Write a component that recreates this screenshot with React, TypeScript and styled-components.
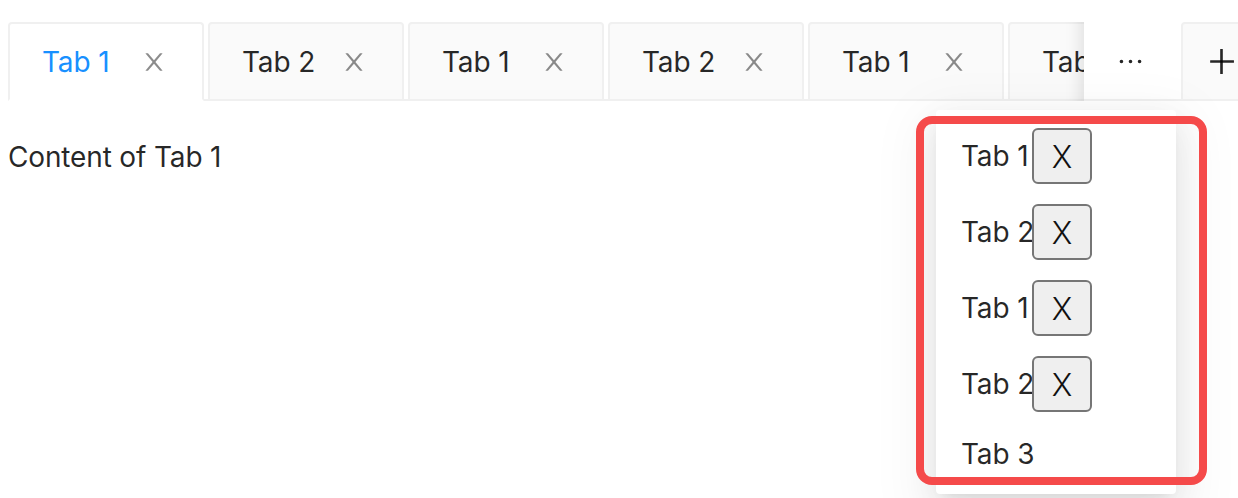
import styled, { createGlobalStyle } from "styled-components"

const GlobalStyle = createGlobalStyle`
    body {
        margin: 0;
        font-family: Inter, "Liberation Sans", sans-serif;
        color: rgba(0, 0, 0, 0.85);
        background: #fff;
    }
`
const Page = styled.div`
    position: relative;
    width: 1238px;
    height: 498px;
    overflow: hidden;
    padding: 22px 0 0 8px;
    box-sizing: border-box;
`
const Nav = styled.div`
    position: relative;
    display: flex;
    height: 79px;
    &::before {
        content: "";
        position: absolute;
        left: 0;
        right: -8px;
        bottom: 0;
        height: 2px;
        background: #f0f0f0;
    }
`
const NavWrap = styled.div`
    position: relative;
    width: 1076px;
    flex: none;
    overflow: hidden;
    &::after {
        content: "";
        position: absolute;
        top: 0;
        right: 0;
        bottom: 0;
        width: 32px;
        box-shadow: inset -20px 0 16px -16px rgba(0, 0, 0, 0.1);
        z-index: 2;
    }
`
const NavList = styled.div`
    display: flex;
    gap: 4px;
    height: 100%;
`
const Tab = styled.div<{ $active?: boolean }>`
    position: relative;
    z-index: 1;
    flex: none;
    box-sizing: border-box;
    width: 196px;
    height: 79px;
    padding: 0 36px 0 32px;
    display: flex;
    align-items: center;
    justify-content: space-between;
    font-size: 28px;
    letter-spacing: -0.15px;
    border: 2px solid #f0f0f0;
    border-bottom-color: ${(p) => (p.$active ? "#fff" : "#f0f0f0")};
    border-radius: 4px 4px 0 0;
    background: ${(p) => (p.$active ? "#fff" : "#fafafa")};
    color: ${(p) => (p.$active ? "#1890ff" : "rgba(0, 0, 0, 0.85)")};
`
const CloseIcon = styled.svg`
    width: 24px;
    height: 24px;
    fill: rgba(0, 0, 0, 0.45);
    flex: none;
`
const MoreButton = styled.div`
    flex: none;
    width: 93px;
    display: flex;
    align-items: center;
    justify-content: center;
`
const AddButton = styled.div`
    position: relative;
    z-index: 1;
    flex: none;
    box-sizing: border-box;
    width: 80px;
    height: 79px;
    margin-left: 4px;
    display: flex;
    align-items: center;
    justify-content: center;
    border: 2px solid #f0f0f0;
    border-radius: 4px 4px 0 0;
    background: #fafafa;
`
const OpIcon = styled.svg<{ $size: number }>`
    width: ${(p) => p.$size}px;
    height: ${(p) => p.$size}px;
    fill: rgba(0, 0, 0, 0.85);
`
const Content = styled.div`
    margin-top: 34px;
    font-size: 28px;
    line-height: 44px;
    letter-spacing: -0.15px;
`
const Dropdown = styled.ul`
    position: absolute;
    left: 936px;
    top: 110px;
    width: 240px;
    margin: 0;
    padding: 8px 0;
    list-style: none;
    background: #fff;
    border-radius: 4px;
    box-shadow: 0 6px 12px -8px rgba(0, 0, 0, 0.12), 0 12px 32px 0 rgba(0, 0, 0, 0.08),
        0 18px 56px 16px rgba(0, 0, 0, 0.05);
    z-index: 5;
`
const MenuItem = styled.li`
    display: flex;
    align-items: center;
    padding: 10px 24px 10px 25px;
    min-height: 44px;
    font-size: 28px;
    line-height: 44px;
    letter-spacing: -0.15px;
`
const MenuLabel = styled.span`
    width: 71px;
    flex: none;
    white-space: nowrap;
`
const RemoveButton = styled.button`
    box-sizing: border-box;
    width: 60px;
    height: 56px;
    padding: 0;
    border: 2px solid #767676;
    border-radius: 6px;
    background: #efefef;
    color: #111;
    font-family: Inter, "Liberation Sans", sans-serif;
    font-size: 31px;
    font-weight: 300;
    line-height: 1;
`
const Highlight = styled.div`
    position: absolute;
    left: 916px;
    top: 116px;
    width: 291px;
    height: 369px;
    box-sizing: border-box;
    border: 8px solid #f54a4a;
    border-radius: 16px;
    z-index: 6;
    pointer-events: none;
`

const closePath =
    "M563.8 512l262.5-312.9c4.4-5.2.7-13.1-6.1-13.1h-79.8c-4.7 0-9.2 2.1-12.3 5.7L511.6 449.8 295.1 191.7c-3-3.6-7.5-5.7-12.3-5.7H203c-6.8 0-10.5 7.9-6.1 13.1L459.4 512 196.9 824.9A7.95 7.95 0 00203 838h79.8c4.7 0 9.2-2.1 12.3-5.7l216.5-258.1 216.5 258.1c3 3.6 7.5 5.7 12.3 5.7h79.8c6.8 0 10.5-7.9 6.1-13.1L563.8 512z"

const tabs = ["Tab 1", "Tab 2", "Tab 1", "Tab 2", "Tab 1", "Tab 3"]
const menu = [
    { label: "Tab 1", closable: true },
    { label: "Tab 2", closable: true },
    { label: "Tab 1", closable: true },
    { label: "Tab 2", closable: true },
    { label: "Tab 3", closable: false },
]

export default function App() {
    return (
        <>
            <GlobalStyle />
            <Page>
                <Nav>
                    <NavWrap>
                        <NavList>
                            {tabs.map((label, index) => (
                                <Tab key={`${label + index}`} $active={index === 0}>
                                    <span>{label}</span>
                                    <CloseIcon viewBox="64 64 896 896">
                                        <path d={closePath} />
                                    </CloseIcon>
                                </Tab>
                            ))}
                        </NavList>
                    </NavWrap>
                    <MoreButton>
                        <OpIcon $size={29} viewBox="64 64 896 896">
                            <path d="M176 511a56 56 0 10112 0 56 56 0 10-112 0zm280 0a56 56 0 10112 0 56 56 0 10-112 0zm280 0a56 56 0 10112 0 56 56 0 10-112 0z" />
                        </OpIcon>
                    </MoreButton>
                    <AddButton>
                        <OpIcon $size={31} viewBox="64 64 896 896">
                            <path d="M482 152h60q8 0 8 8v704q0 8-8 8h-60q-8 0-8-8V160q0-8 8-8z" />
                            <path d="M192 474h672q8 0 8 8v60q0 8-8 8H192q-8 0-8-8v-60q0-8 8-8z" />
                        </OpIcon>
                    </AddButton>
                </Nav>
                <Content>Content of Tab 1</Content>
                <Dropdown>
                    {menu.map((item, index) => (
                        <MenuItem key={`${item.label + index}`}>
                            <MenuLabel>{item.label}</MenuLabel>
                            {item.closable && <RemoveButton>X</RemoveButton>}
                        </MenuItem>
                    ))}
                </Dropdown>
                <Highlight />
            </Page>
        </>
    )
}
